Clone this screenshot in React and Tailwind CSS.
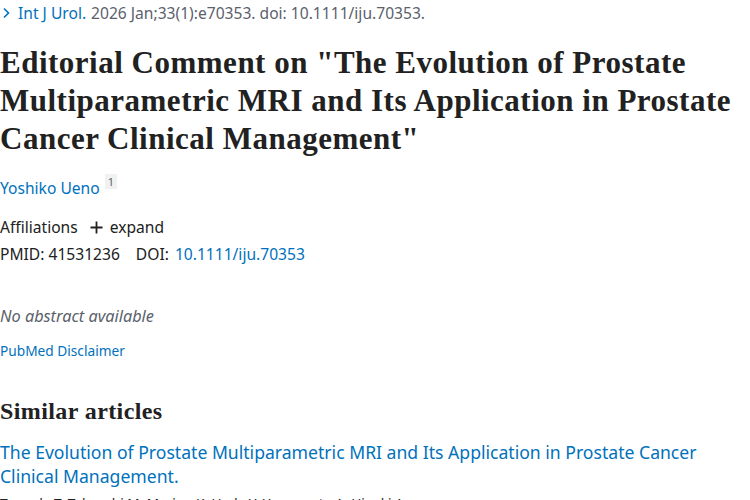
export default function App() {
  const sans = { fontFamily: '"Segoe UI", "Noto Sans", "Open Sans", sans-serif' };
  const serif = { fontFamily: '"Liberation Serif", serif' };
  return (
    <div className="w-[750px] h-[500px] overflow-hidden bg-white text-[#212121]" style={sans}>
      <div className="flex items-center text-[15.6px] leading-[24px] pt-[1px]">
        <svg width="14" height="14" viewBox="0 0 14 14" className="mr-[4px] text-[#0071bc]">
          <path d="M4 2.5 L8.5 7 L4 11.5" fill="none" stroke="currentColor" strokeWidth="1.6" />
        </svg>
        <span className="text-[#0071bc]">Int J Urol.</span>
        <span className="text-[#5b616b] ml-[5px]">2026 Jan;33(1):e70353. doi: 10.1111/iju.70353.</span>
      </div>
      <h1 className="mt-[19px] text-[31px] leading-[38px] font-bold tracking-[0.5px] text-[#212121]" style={serif}>
        Editorial Comment on "The Evolution of Prostate Multiparametric MRI and Its Application in Prostate Cancer Clinical Management"
      </h1>
      <div className="mt-[19px] flex items-start text-[15.6px] leading-[22px]">
        <span className="text-[#0071bc]">Yoshiko Ueno</span>
        <span className="ml-[5px] mt-[-3px] bg-[#f1f1f1] px-[3px] text-[11px] leading-[15px] text-[#5b616b]">1</span>
      </div>
      <div className="mt-[17px] flex items-center text-[15.6px] leading-[22px]">
        <span>Affiliations</span>
        <svg width="13" height="13" viewBox="0 0 13 13" className="ml-[12px] mr-[7px]">
          <path d="M6.5 0.5 V12.5 M0.5 6.5 H12.5" stroke="#212121" strokeWidth="1.8" />
        </svg>
        <span>expand</span>
      </div>
      <div className="mt-[5px] flex items-center text-[15.6px] leading-[22px]">
        <span>PMID: 41531236</span>
        <span className="ml-[16px]">DOI:</span>
        <span className="ml-[6px] text-[#0071bc]">10.1111/iju.70353</span>
      </div>
      <div className="mt-[40px] italic text-[16.3px] leading-[22px] text-[#5b616b]">No abstract available</div>
      <div className="mt-[15px] text-[13.7px] leading-[18px] text-[#0071bc]">PubMed Disclaimer</div>
      <h2 className="mt-[36px] text-[24px] leading-[30px] font-bold tracking-[0.4px] text-[#212121]" style={serif}>
        Similar articles
      </h2>
      <div className="mt-[14px] text-[17.6px] leading-[24px] text-[#0071bc]">
        The Evolution of Prostate Multiparametric MRI and Its Application in Prostate Cancer Clinical Management.
      </div>
      <div className="mt-[6px] text-[13.6px] leading-[20px]">Tamada T, Takeuchi M, Marino K, Ueda Y, Yamamoto A, Higaki A.</div>
    </div>
  );
}
